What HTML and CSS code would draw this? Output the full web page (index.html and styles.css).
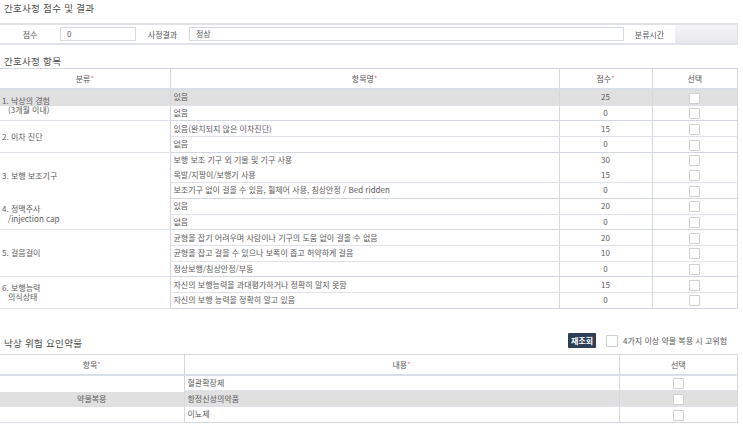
FILE: index.html
```html
<!DOCTYPE html>
<html lang="ko">
<head>
    <meta charset="UTF-8">
    <title>간호사정</title>
    <link rel="stylesheet" href="styles.css">
</head>
<body>
    <div class="page">
        <h2 class="title">간호사정 점수 및 결과</h2>
        <div class="result-bar">
            <span class="label label-score">점수</span>
            <div class="field field-score">0</div>
            <span class="label label-result">사정결과</span>
            <div class="field field-result">정상</div>
            <span class="label label-time">분류시간</span>
            <div class="time-box"></div>
        </div>

        <h2 class="title title-items">간호사정 항목</h2>
        <table class="grid grid-items">
            <colgroup>
                <col style="width:170px">
                <col style="width:389px">
                <col style="width:93px">
                <col>
            </colgroup>
            <thead>
                <tr>
                    <th>분류<i>*</i></th>
                    <th>항목명<i>*</i></th>
                    <th>점수<i>*</i></th>
                    <th>선택</th>
                </tr>
            </thead>
            <tbody>
                <tr class="on">
                    <td rowspan="2" class="cat cat-top">1. 낙상의 경험<br><span class="sub">(3개월 이내)</span></td>
                    <td>있음</td><td class="num">25</td><td class="chk"><span class="box"></span></td>
                </tr>
                <tr class="end">
                    <td>없음</td><td class="num">0</td><td class="chk"><span class="box"></span></td>
                </tr>
                <tr>
                    <td rowspan="2" class="cat">2. 이차 진단</td>
                    <td>있음(완치되지 않은 이차진단)</td><td class="num">15</td><td class="chk"><span class="box"></span></td>
                </tr>
                <tr class="end">
                    <td>없음</td><td class="num">0</td><td class="chk"><span class="box"></span></td>
                </tr>
                <tr class="open">
                    <td rowspan="3" class="cat">3. 보행 보조기구</td>
                    <td>보행 보조 기구 외 기물 및 기구 사용</td><td class="num">30</td><td class="chk"><span class="box"></span></td>
                </tr>
                <tr>
                    <td>목발/지팡이/보행기 사용</td><td class="num">15</td><td class="chk"><span class="box"></span></td>
                </tr>
                <tr class="end">
                    <td>보조기구 없이 걸을 수 있음, 휠체어 사용, 침상안정 / Bed ridden</td><td class="num">0</td><td class="chk"><span class="box"></span></td>
                </tr>
                <tr>
                    <td rowspan="2" class="cat">4. 정맥주사<br><span class="sub">/injection cap</span></td>
                    <td>있음</td><td class="num">20</td><td class="chk"><span class="box"></span></td>
                </tr>
                <tr class="end">
                    <td>없음</td><td class="num">0</td><td class="chk"><span class="box"></span></td>
                </tr>
                <tr>
                    <td rowspan="3" class="cat">5. 걸음걸이</td>
                    <td>균형을 잡기 어려우며 사람이나 기구의 도움 없이 걸을 수 없음</td><td class="num">20</td><td class="chk"><span class="box"></span></td>
                </tr>
                <tr>
                    <td>균형을 잡고 걸을 수 있으나 보폭이 좁고 허약하게 걸음</td><td class="num">10</td><td class="chk"><span class="box"></span></td>
                </tr>
                <tr class="end">
                    <td>정상보행/침상안정/부동</td><td class="num">0</td><td class="chk"><span class="box"></span></td>
                </tr>
                <tr>
                    <td rowspan="2" class="cat">6. 보행능력<br><span class="sub">의식상태</span></td>
                    <td>자신의 보행능력을 과대평가하거나 정확히 알지 못함</td><td class="num">15</td><td class="chk"><span class="box"></span></td>
                </tr>
                <tr class="end">
                    <td>자신의 보행 능력을 정확히 알고 있음</td><td class="num">0</td><td class="chk"><span class="box"></span></td>
                </tr>
            </tbody>
        </table>

        <div class="drug-head">
            <h2 class="title">낙상 위험 요인약물</h2>
            <div class="tools">
                <button class="btn">재조회</button>
                <span class="box"></span>
                <span class="tool-text">4가지 이상 약물 복용 시 고위험</span>
            </div>
        </div>
        <table class="grid grid-drugs">
            <colgroup>
                <col style="width:184px">
                <col style="width:435px">
                <col>
            </colgroup>
            <thead>
                <tr>
                    <th>항목<i>*</i></th>
                    <th>내용<i>*</i></th>
                    <th>선택</th>
                </tr>
            </thead>
            <tbody>
                <tr>
                    <td rowspan="3" class="drug-cat">약물복용</td>
                    <td>혈관확장제</td><td class="chk"><span class="box"></span></td>
                </tr>
                <tr class="on">
                    <td>항정신성의약품</td><td class="chk"><span class="box"></span></td>
                </tr>
                <tr class="end">
                    <td>이뇨제</td><td class="chk"><span class="box"></span></td>
                </tr>
            </tbody>
        </table>
    </div>
</body>
</html>
```

FILE: styles.css
```css
body {
    margin: 0;
    background-color: #fff;
    font-family: "Noto Sans CJK KR", "Noto Sans", sans-serif;
    color: #5a5a5a;
}

.page {
    width: 738px;
}

.title {
    margin: 0;
    padding: 2px 0 0 4px;
    font-size: 9.5px;
    font-weight: normal;
    line-height: 12px;
    letter-spacing: 0.3px;
    color: #4a4a4a;
}

/* 점수 및 결과 */
.result-bar {
    display: flex;
    align-items: center;
    height: 18px;
    margin-top: 9px;
    border-top: 2px solid #dfe2e7;
    border-bottom: 2px solid #dfe2e7;
    font-size: 8px;
}

.label {
    text-align: center;
    color: #555;
}

.label-score {
    width: 60px;
}

.label-result {
    width: 53px;
}

.label-time {
    width: 51px;
}

.field {
    box-sizing: border-box;
    height: 14px;
    padding-left: 6px;
    border: 1px solid #d6dae0;
    line-height: 12px;
    color: #555;
}

.field-score {
    width: 76px;
}

.field-result {
    width: 435px;
}

.time-box {
    align-self: stretch;
    width: 62px;
    border-right: 1px solid #e0e2e6;
    background: linear-gradient(to bottom, #f6f6f7, #e6e7ea);
}

.title-items {
    margin-top: 8px;
}

/* tables */
.grid {
    width: 738px;
    margin-top: 1px;
    border-collapse: collapse;
    table-layout: fixed;
    font-size: 8px;
}

.grid th {
    height: 19px;
    padding: 0;
    border-top: 1px solid #d3d8e0;
    border-bottom: 2px solid #dadee5;
    border-left: 1px solid #d3d8e0;
    font-weight: normal;
    color: #555;
}

.grid th:first-child {
    border-left: none;
}

.grid th:last-child,
.grid td:last-child {
    border-right: 1px solid #d3d8e0;
}

.grid th i {
    position: relative;
    top: -1px;
    font-style: normal;
    color: #ec6f6f;
    font-size: 7px;
}

.grid td {
    height: 14.7px;
    padding: 0 0 0 3px;
    border-left: 1px solid #d3d8e0;
    border-bottom: 1px solid #dfe2e8;
    line-height: 12px;
    white-space: nowrap;
    vertical-align: middle;
}

.grid td.cat,
.grid td.drug-cat {
    border-left: none;
    padding-left: 2px;
    line-height: 9.5px;
}

.grid tr.end td {
    border-bottom: 1px solid #d3d8e0;
}

.grid tr.open td {
    border-bottom: none;
}

.cat .sub {
    padding-left: 6px;
}

.grid tr.on td {
    background-color: #e0e0e0;
}

.grid tr.on td.cat-top {
    background: linear-gradient(to bottom, #e0e0e0 15.6px, #fff 15.6px);
}

.grid td.num {
    padding: 0;
    text-align: center;
}

.grid td.chk {
    padding: 0;
    text-align: center;
}

.box {
    display: inline-block;
    box-sizing: border-box;
    width: 11px;
    height: 11px;
    border: 1px solid #cfcfcf;
    border-radius: 1px;
    background-color: #fff;
    vertical-align: middle;
}

/* 낙상 위험 요인약물 */
.drug-head {
    display: flex;
    align-items: center;
    justify-content: space-between;
    margin-top: 24px;
}

.drug-head .title {
    padding-top: 4px;
}

.tools {
    display: flex;
    align-items: center;
    padding-right: 11px;
    font-size: 8px;
}

.btn {
    height: 15px;
    padding: 0 3px;
    border: none;
    border-radius: 1px;
    background-color: #2f3e57;
    color: #fff;
    font-family: inherit;
    font-size: 8px;
    font-weight: bold;
    line-height: 15px;
}

.tools .box {
    width: 12px;
    height: 12px;
    margin: 0 5px 0 10px;
}

.tool-text {
    color: #555;
}

.grid-drugs {
    margin-top: 5px;
}

.grid td.drug-cat {
    padding: 0;
    text-align: center;
    background: linear-gradient(to bottom, #fff 15.6px, #e0e0e0 15.6px, #e0e0e0 31.2px, #fff 31.2px);
}
```
